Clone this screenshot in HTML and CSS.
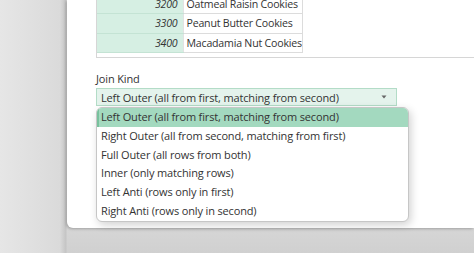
FILE: index.html
```html
<!DOCTYPE html>
<html>
<head>
<meta charset="utf-8">
<link rel="stylesheet" href="styles.css">
</head>
<body>
<div class="screen">
  <div class="dialog">
    <div class="preview">
      <table class="grid">
        <tr><td class="num">3200</td><td class="name">Oatmeal Raisin Cookies</td></tr>
        <tr><td class="num">3300</td><td class="name">Peanut Butter Cookies</td></tr>
        <tr><td class="num">3400</td><td class="name">Macadamia Nut Cookies</td></tr>
      </table>
    </div>
    <div class="field">
      <div class="label">Join Kind</div>
      <div class="select">
        <span class="select-text">Left Outer (all from first, matching from second)</span>
        <svg class="arrow" width="6" height="4" viewBox="0 0 6 4"><path d="M0.5 0.5 L5.5 0.5 L3 3.5 Z" fill="#666"/></svg>
        <ul class="menu">
          <li class="item selected">Left Outer (all from first, matching from second)</li>
          <li class="item">Right Outer (all from second, matching from first)</li>
          <li class="item">Full Outer (all rows from both)</li>
          <li class="item">Inner (only matching rows)</li>
          <li class="item">Left Anti (rows only in first)</li>
          <li class="item">Right Anti (rows only in second)</li>
        </ul>
      </div>
    </div>
  </div>
</div>
</body>
</html>
```
FILE: styles.css
```css
html, body {
  margin: 0;
  padding: 0;
}
body {
  width: 474px;
  height: 253px;
  overflow: hidden;
  background: linear-gradient(to bottom, #dedede 0px, #d6d6d6 228px, #d0d0d0 253px);
  font-family: "Open Sans", "Noto Sans", sans-serif;
  letter-spacing: -0.15px;
  color: #333;
}
.screen {
  display: flex;
  height: 253px;
  padding-left: 67px;
  box-sizing: border-box;
  background: linear-gradient(to right, #e6e6e6 0px, #dadada 60px, #c4c4c4 66px, transparent 67px);
}
.dialog {
  flex: 1;
  height: 228px;
  background: #fff;
  border-bottom-left-radius: 6px;
  box-shadow: -1px 1px 3px rgba(0,0,0,0.25);
  padding-left: 29px;
  display: flex;
  flex-direction: column;
}
.preview {
  height: 58px;
  border-left: 1px solid #d6d6d6;
  border-bottom: 1px solid #d6d6d6;
  box-sizing: border-box;
  overflow: hidden;
}
.grid {
  border-collapse: collapse;
  margin-top: -6px;
  font-size: 10.6px;
  letter-spacing: -0.2px;
  table-layout: fixed;
  width: 205px;
}
.grid td {
  height: 19.5px;
  padding: 0 3px;
  box-sizing: border-box;
  border-bottom: 1px solid #dcdcdc;
  line-height: 18px;
  white-space: nowrap;
  overflow: hidden;
}
.grid td.num {
  width: 86px;
  padding-right: 5px;
  text-align: right;
  font-style: italic;
  background: #d6efe3;
  border-bottom-color: #c4e3d4;
  border-right: 1px solid #e2e2e2;
}
.grid td.name {
  width: 119px;
  border-right: 1px solid #dcdcdc;
}
.field {
  margin-top: 13px;
  display: flex;
  flex-direction: column;
  width: 301px;
}
.label {
  font-size: 11px;
  line-height: 15px;
  margin-bottom: 2px;
}
.select {
  position: relative;
  height: 18px;
  box-sizing: border-box;
  border: 1px solid #b3dcc7;
  background: #e4f3ec;
  display: flex;
  align-items: center;
  padding: 0 9px 0 4px;
  font-size: 11px;
}
.select-text {
  flex: 1;
}
.arrow {
  display: block;
}
.menu {
  position: absolute;
  top: 18px;
  left: -1px;
  width: 313px;
  margin: 0;
  padding: 0;
  list-style: none;
  background: #fff;
  border: 1px solid #c6c6c6;
  border-radius: 6px;
  box-shadow: 2px 3px 8px rgba(0,0,0,0.18);
  box-sizing: border-box;
  overflow: hidden;
}
.item {
  height: 18.8px;
  line-height: 18.8px;
  padding-left: 4px;
  font-size: 11px;
  white-space: nowrap;
}
.item.selected {
  background: #a3d9bf;
  border-left: 2px solid #78c19d;
  padding-left: 2px;
}
```
